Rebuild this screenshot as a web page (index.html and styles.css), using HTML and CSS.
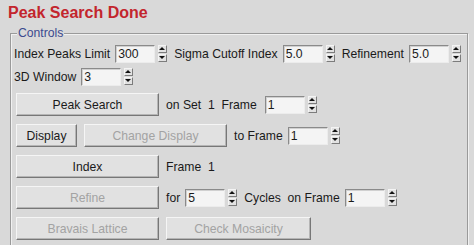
FILE: index.html
```html
<!DOCTYPE html>
<html lang="en">
<head>
    <meta charset="UTF-8">
    <title>Peak Search Done</title>
    <link rel="stylesheet" href="styles.css">
</head>
<body>

<h1 class="title">Peak Search Done</h1>

<fieldset class="controls">
    <legend>Controls</legend>

    <div class="row">
        <label>Index Peaks Limit</label>
        <span class="field">300</span><span class="arrows"><i class="up"></i><i class="down"></i></span>
        <label>Sigma Cutoff Index</label>
        <span class="field">5.0</span><span class="arrows"><i class="up"></i><i class="down"></i></span>
        <label>Refinement</label>
        <span class="field">5.0</span><span class="arrows"><i class="up"></i><i class="down"></i></span>
    </div>

    <div class="row last-input">
        <label>3D Window</label>
        <span class="field">3</span><span class="arrows"><i class="up"></i><i class="down"></i></span>
    </div>

    <div class="row btn-row">
        <button class="btn wide">Peak Search</button>
        <label class="wide-gap">on Set  1  Frame</label>
        <span class="field">1</span><span class="arrows"><i class="up"></i><i class="down"></i></span>
    </div>

    <div class="row btn-row">
        <button class="btn small">Display</button>
        <button class="btn wide" disabled>Change Display</button>
        <label>to Frame</label>
        <span class="field">1</span><span class="arrows"><i class="up"></i><i class="down"></i></span>
    </div>

    <div class="row btn-row">
        <button class="btn wide">Index</button>
        <label>Frame  1</label>
    </div>

    <div class="row btn-row">
        <button class="btn wide" disabled>Refine</button>
        <label>for</label>
        <span class="field">5</span><span class="arrows"><i class="up"></i><i class="down"></i></span>
        <label>Cycles  on Frame</label>
        <span class="field">1</span><span class="arrows"><i class="up"></i><i class="down"></i></span>
    </div>

    <div class="row btn-row">
        <button class="btn wide" disabled>Bravais Lattice</button>
        <button class="btn wider" disabled>Check Mosaicity</button>
    </div>
</fieldset>

</body>
</html>
```

FILE: styles.css
```css
body {
    margin: 0;
    padding: 0;
    height: 245px;
    background: #d9d9d9;
    font-family: "Liberation Sans", Arial, sans-serif;
    font-size: 12.2px;
    color: #1a1a1a;
    overflow: hidden;
}
.title {
    margin: 0;
    padding: 4px 0 0 8px;
    font-size: 16px;
    line-height: 18px;
    font-weight: bold;
    color: #c3252d;
}
.controls {
    box-sizing: border-box;
    margin: 4px 0 0 10px;
    width: 458px;
    height: 222px;
    padding: 2px 0 0 3px;
    border: 1px solid #9a9a9a;
    box-shadow: inset 1px 1px 0 #f1f1f1, 1px 1px 0 #f1f1f1;
}
.controls legend {
    margin-left: 3px;
    padding: 0 1px;
    line-height: 14px;
    color: #3b4a8f;
    background: #d9d9d9;
}
.row {
    display: flex;
    align-items: center;
    height: 23px;
}
.row label {
    white-space: pre;
    margin-right: 5px;
}
.row .wide-gap {
    margin-right: 8px;
}
.last-input {
    margin-bottom: 1px;
}
.btn-row {
    height: 31px;
}
.field {
    box-sizing: border-box;
    width: 40px;
    height: 18px;
    padding: 0 2px;
    margin-right: 3px;
    background: #f4f4f4;
    border: 1px solid #ececec;
    border-top-color: #8a8a8a;
    border-left-color: #8a8a8a;
    box-shadow: inset 1px 1px 0 #d0d0d0;
    line-height: 16px;
}
.arrows {
    display: flex;
    flex-direction: column;
    gap: 1px;
    margin-right: 7px;
}
.arrows:last-child {
    margin-right: 0;
}
.arrows i {
    position: relative;
    display: block;
    box-sizing: border-box;
    width: 9px;
    height: 8px;
    background: #e2e2e2;
    border: 1px solid #f4f4f4;
    border-right-color: #7c7c7c;
    border-bottom-color: #7c7c7c;
}
.arrows i::after {
    content: "";
    position: absolute;
    left: 0;
    border-left: 3px solid transparent;
    border-right: 3px solid transparent;
}
.arrows .up::after {
    top: 1px;
    border-bottom: 3px solid #111;
}
.arrows .down::after {
    top: 1px;
    border-top: 3px solid #111;
}
.btn {
    box-sizing: border-box;
    height: 23px;
    margin: 0 7px 0 2px;
    padding: 0;
    font-family: inherit;
    font-size: 12.2px;
    color: #1a1a1a;
    background: #e1e1e1;
    border: 1px solid #f5f5f5;
    border-right-color: #777;
    border-bottom-color: #777;
    box-shadow: inset -1px -1px 0 #b5b5b5;
}
.btn + .btn {
    margin-left: 0;
}
.btn:disabled {
    color: #a3a3a3;
}
.wide {
    width: 143px;
}
.wider {
    width: 145px;
}
.small {
    width: 61px;
}
```
